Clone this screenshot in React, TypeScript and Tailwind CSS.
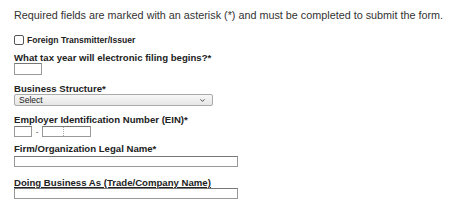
import { ChevronDown } from "lucide-react";

function Label({ text, className = "" }: { text: string; className?: string }) {
    return <div className={`h-[10px] text-[9.6px] leading-[10px] font-bold text-[#222] ${className}`}>{text}</div>;
}

export default function App() {
    return (
        <div className="h-[204px] w-[474px] bg-white pl-[14px] font-['Liberation_Sans',Arial,sans-serif]">
            <p className="pt-[9px] text-[10.8px] leading-[12px] text-[#333]">
                Required fields are marked with an asterisk (*) and must be completed to submit the form.
            </p>

            <label className="mt-[14px] flex h-[10px] items-center gap-[3px]">
                <span className="h-[10px] w-[10px] rounded-[2px] border border-[#555] bg-white" />
                <span className="text-[8.6px] leading-[10px] font-bold text-[#222]">Foreign Transmitter/Issuer</span>
            </label>

            <Label text="What tax year will electronic filing begins?*" className="mt-[8px]" />
            <div className="h-[12px] w-[28px] border border-[#999] border-t-[#777] bg-white" />

            <Label text="Business Structure*" className="mt-[9px]" />
            <div className="flex h-[12px] w-[199px] items-center justify-between rounded-[2px] border border-[#aaa] bg-linear-to-b from-[#f7f7f7] to-[#e6e6e6] pr-[6px] pl-[4px]">
                <span className="text-[8.5px] leading-[10px] text-[#222]">Select</span>
                <ChevronDown className="h-[7px] w-[7px] text-[#333]" strokeWidth={3} />
            </div>

            <Label text="Employer Identification Number (EIN)*" className="mt-[9px]" />
            <div className="mt-[1px] flex h-[11px] items-center">
                <div className="h-[11px] w-[18px] border border-[#999] border-t-[#777] bg-white" />
                <span className="w-[10px] text-center text-[8px] leading-[10px] text-[#333]">-</span>
                <div className="flex h-[11px] w-[49px] border border-[#999] border-t-[#777] bg-white pl-[20px]">
                    <div className="h-full border-l border-dotted border-[#aaa]" />
                </div>
            </div>

            <Label text="Firm/Organization Legal Name*" className="mt-[7px]" />
            <div className="mt-[2px] h-[11px] w-[224px] border border-[#999] border-t-[#777] bg-white" />

            <Label text="Doing Business As (Trade/Company Name)" className="mt-[11px] underline" />
            <div className="h-[11px] w-[224px] border border-[#999] border-t-[#777] bg-white" />
        </div>
    );
}
